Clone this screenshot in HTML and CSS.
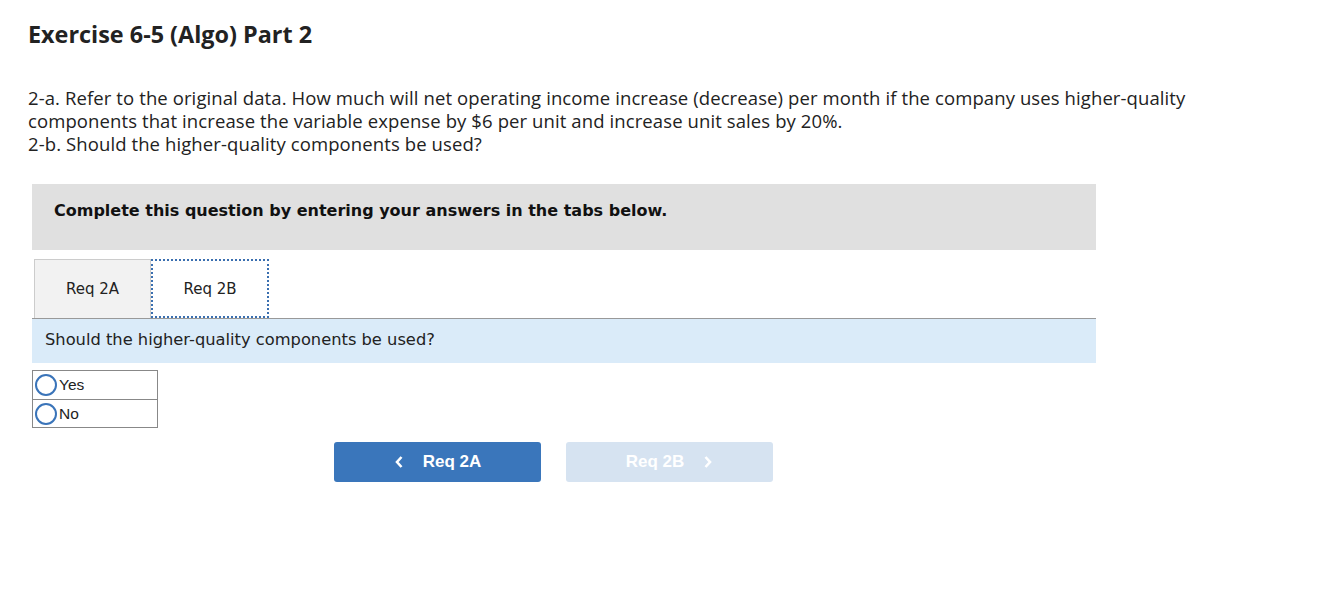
FILE: index.html
```html
<!DOCTYPE html>
<html>
<head>
<meta charset="utf-8">
<link rel="stylesheet" href="styles.css">
</head>
<body>
<div class="page">
  <h1 class="title">Exercise 6-5 (Algo) Part 2</h1>
  <div class="prompt">
    <p>2-a. Refer to the original data. How much will net operating income increase (decrease) per month if the company uses higher-quality components that increase the variable expense by $6 per unit and increase unit sales by 20%.</p>
    <p>2-b. Should the higher-quality components be used?</p>
  </div>
  <div class="question">
    <div class="banner">Complete this question by entering your answers in the tabs below.</div>
    <div class="tabs">
      <div class="tab">Req 2A</div>
      <div class="tab active">Req 2B</div>
    </div>
    <div class="ask">Should the higher-quality components be used?</div>
    <div class="choices">
      <label class="choice"><span class="radio"></span>Yes</label>
      <label class="choice"><span class="radio"></span>No</label>
    </div>
    <div class="nav">
      <button class="btn prev"><span class="chev">
        <svg width="10" height="14" viewBox="0 0 10 14"><path d="M7.5 2 L3 7 L7.5 12" fill="none" stroke="#fff" stroke-width="2.6"/></svg>
      </span>Req 2A</button>
      <button class="btn next">Req 2B<span class="chev">
        <svg width="10" height="14" viewBox="0 0 10 14"><path d="M2.5 2 L7 7 L2.5 12" fill="none" stroke="#fff" stroke-width="2.6"/></svg>
      </span></button>
    </div>
  </div>
</div>
</body>
</html>
```
FILE: styles.css
```css
html, body { margin: 0; padding: 0; background: #fff; }
.page { padding: 21px 0 0 28px; font-family: "Open Sans", Lato, sans-serif; color: #222; }
.title { margin: 0; font-size: 23.4px; font-weight: 700; line-height: 26px; color: #222; }
.prompt { margin-top: 39px; font-size: 18.5px; letter-spacing: 0.1px; line-height: 23px; color: #222; width: 1200px; }
.prompt p { margin: 0; }
.question { margin-top: 29px; margin-left: 4px; width: 1064px; font-family: "DejaVu Sans", Verdana, sans-serif; }
.banner { background: #e0e0e0; height: 66px; box-sizing: border-box; padding: 17px 0 0 22px; font-size: 16px; font-weight: 700; color: #111; }
.tabs { display: flex; margin-top: 9px; border-bottom: 1px solid #999; padding-left: 2px; }
.tab { width: 117px; height: 59px; box-sizing: border-box; display: flex; align-items: center; justify-content: center; font-size: 15px; color: #222; background: #f2f2f2; border: 1px solid #ccc; border-bottom: none; }
.tab.active { background: #fff; border: 2px dotted #3a6fb0; width: 118px; }
.ask { background: #daebf9; height: 44px; box-sizing: border-box; padding: 11px 0 0 13px; font-size: 16.3px; color: #222; }
.choices { margin-top: 7px; width: 126px; box-sizing: border-box; border: 1px solid #888; display: flex; flex-direction: column; font-family: "Liberation Sans", Arial, sans-serif; }
.choice { height: 28px; display: flex; align-items: center; padding-left: 2px; font-size: 15.5px; color: #222; }
.choice + .choice { border-top: 1px solid #888; height: 27px; }
.radio { display: inline-block; width: 22px; height: 22px; box-sizing: border-box; border: 2px solid #3a74b9; border-radius: 50%; margin-right: 2px; }
.nav { display: flex; gap: 25px; margin-top: 14px; margin-left: 302px; }
.btn { width: 207px; height: 40px; border: none; border-radius: 3px; font-family: "Liberation Sans", Arial, sans-serif; font-weight: 700; font-size: 17px; color: #fff; display: flex; align-items: center; justify-content: center; padding: 0; }
.btn.prev { background: #3a76bb; }
.btn.next { background: #d6e3f1; }
.prev .chev { margin-right: 19px; display: flex; }
.next .chev { margin-left: 19px; display: flex; }
```
